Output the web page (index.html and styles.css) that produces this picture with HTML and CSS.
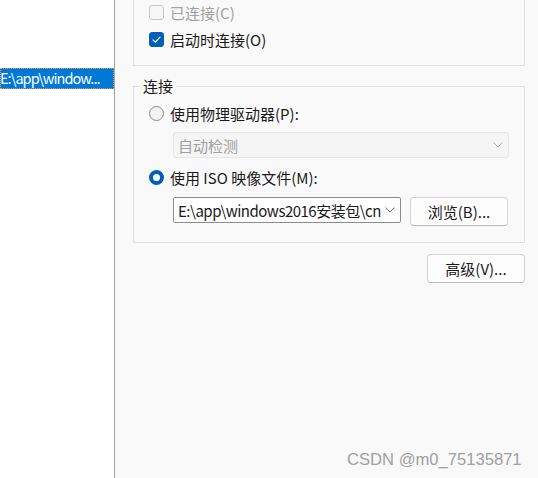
FILE: index.html
```html
<!DOCTYPE html>
<html lang="zh-CN">
<head>
<meta charset="utf-8">
<link rel="stylesheet" href="styles.css">
</head>
<body>
<div class="window">
  <div class="sidebar">
    <div class="item">E:\app\window...</div>
  </div>
  <div class="main">
    <div class="group group-top">
      <div class="row disabled"><span class="cb"></span><span>已连接(C)</span></div>
      <div class="row"><span class="cb checked"><svg width="15" height="15" viewBox="0 0 15 15"><polyline points="4,7.8 6.4,10.2 11,5.2" fill="none" stroke="#fff" stroke-width="1.2" stroke-linecap="round" stroke-linejoin="round"/></svg></span><span>启动时连接(O)</span></div>
    </div>
    <fieldset class="group group-conn">
      <legend>连接</legend>
      <div class="row radio-row first"><span class="radio"></span><span>使用物理驱动器(P):</span></div>
      <div class="select select-disabled"><span>自动检测</span><svg class="chev" width="10" height="6" viewBox="0 0 10 6"><polyline points="0.5,0.5 5,5 9.5,0.5" fill="none" stroke="#b0b0b0" stroke-width="1"/></svg></div>
      <div class="row radio-row second"><span class="radio checked"></span><span>使用 ISO 映像文件(M):</span></div>
      <div class="file-row">
        <div class="select combo"><span class="combo-text">E:\app\windows2016安装包\cn</span><svg class="chev" width="10" height="6" viewBox="0 0 10 6"><polyline points="0.5,0.5 5,5 9.5,0.5" fill="none" stroke="#707070" stroke-width="1"/></svg></div>
        <button class="btn">浏览(B)...</button>
      </div>
    </fieldset>
    <div class="actions"><button class="btn">高级(V)...</button></div>
  </div>
  <div class="watermark">CSDN @m0_75135871</div>
</div>
</body>
</html>
```
FILE: styles.css
```css
* { box-sizing: border-box; }
html, body { margin: 0; padding: 0; }
body {
  width: 538px;
  height: 478px;
  overflow: hidden;
  background: #f9f9f9;
  font-family: "Noto Sans CJK SC", "Noto Sans", sans-serif;
  font-size: 15px;
  color: #1a1a1a;
}
.window {
  position: relative;
  display: flex;
  height: 478px;
}
.sidebar {
  width: 115px;
  flex: none;
  background: #ffffff;
  border-right: 1px solid #a0a0a0;
  padding-top: 68px;
  overflow: hidden;
}
.item {
  height: 21px;
  line-height: 20px;
  background: #0078d7;
  color: #ffffff;
  white-space: nowrap;
  font-size: 14.5px;
  letter-spacing: -0.95px;
  outline: 1px dotted #f0a040;
  outline-offset: -1px;
}
.main {
  flex: 1;
  padding: 0 13px 0 18px;
}
.group {
  border: 1px solid #e0e0e0;
}
.group-top {
  border-top: none;
  margin-top: -1px;
  padding: 0 0 12px 15px;
}
.row {
  display: flex;
  align-items: center;
  gap: 6px;
  height: 27px;
  white-space: nowrap;
}
.row.disabled { color: #a0a0a0; }
.cb {
  width: 15px;
  height: 15px;
  flex: none;
  border: 1px solid #c8c8c8;
  border-radius: 3px;
  background: #f6f6f6;
  display: flex;
}
.cb.checked {
  background: #005fb8;
  border-color: #005fb8;
}
.cb.checked svg { margin: -1px; }
.group-conn {
  margin: 10px 0 0 0;
  padding: 0 15px 16px 15px;
  min-width: 0;
}
.group-conn legend {
  padding: 0 3px;
  margin-left: -9px;
  line-height: 20px;
}
.radio-row { height: 22px; }
.radio-row.first { margin-top: 6px; }
.radio-row.second { margin-top: 8px; }
.radio {
  width: 15px;
  height: 15px;
  flex: none;
  border: 1px solid #8a8a8a;
  border-radius: 50%;
  background: #f3f3f3;
}
.radio.checked {
  border: 4.5px solid #005fb8;
  background: #ffffff;
}
.select {
  display: flex;
  align-items: center;
  justify-content: space-between;
  height: 26px;
  padding: 0 5px 0 4px;
  border-radius: 3px;
  white-space: nowrap;
}
.select-disabled {
  margin: 8px 0 0 24px;
  width: 336px;
  background: #f5f5f5;
  border: 1px solid #e6e6e6;
  color: #a0a0a0;
}
.file-row {
  display: flex;
  align-items: flex-start;
  gap: 9px;
  margin: 9px 0 0 24px;
}
.combo {
  width: 228px;
  background: #ffffff;
  border: 1px solid #8c8c8c;
  border-radius: 2px;
  overflow: hidden;
}
.combo-text {
  overflow: hidden;
  letter-spacing: -0.5px;
}
.chev { flex: none; margin-left: 4px; }
.btn {
  width: 98px;
  height: 29px;
  padding: 0;
  background: #fdfdfd;
  border: 1px solid #d4d4d4;
  border-bottom-color: #b9b9b9;
  border-radius: 4px;
  font-family: "Noto Sans CJK SC", "Noto Sans", sans-serif;
  font-size: 15px;
  color: #1a1a1a;
}
.actions {
  display: flex;
  justify-content: flex-end;
  margin-top: 11px;
}
.watermark {
  position: absolute;
  left: 347px;
  top: 451px;
  font-family: "Liberation Sans", Arial, sans-serif;
  font-size: 16.6px;
  line-height: 17px;
  color: #a0a0a0;
  white-space: nowrap;
}
```
